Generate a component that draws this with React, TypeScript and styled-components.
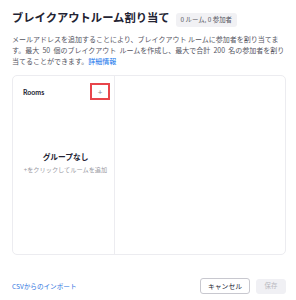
import React from "react";
import styled, { createGlobalStyle } from "styled-components";

const Global = createGlobalStyle`
  html, body { margin: 0; padding: 0; background: #fff; }
  body { font-family: Lato, "Noto Sans CJK JP", sans-serif; }
`;

const Page = styled.div`
  width: 296px;
  height: 300px;
  box-sizing: border-box;
  padding: 8px 10px 0 12px;
  display: flex;
  flex-direction: column;
`;

const Header = styled.div`
  display: flex;
  align-items: flex-start;
  gap: 6px;
`;

const Title = styled.h1`
  margin: 0;
  font-family: "Noto Sans CJK JP", sans-serif;
  font-size: 11.3px;
  line-height: 18px;
  font-weight: 700;
  color: #232333;
`;

const Badge = styled.span`
  margin-top: 5px;
  height: 14px;
  padding: 0 5px;
  border-radius: 3px;
  background: #f1f1f4;
  color: #555560;
  font-family: "Noto Sans CJK JP", sans-serif;
  font-size: 6.4px;
  line-height: 14px;
  white-space: nowrap;
`;

const Desc = styled.p`
  margin: 7px 0 0;
  width: 274px;
  font-family: "Noto Sans CJK JP", sans-serif;
  font-size: 7px;
  line-height: 11px;
  color: #55555f;
  white-space: nowrap;
`;

const WideLine = styled.span`
  word-spacing: 1.6px;
`;

const Link = styled.a`
  color: #0e71eb;
  text-decoration: none;
`;

const Panel = styled.div`
  margin-top: 8px;
  height: 180px;
  box-sizing: border-box;
  border: 1px solid #ececf0;
  border-radius: 5px;
  display: flex;
`;

const RoomsColumn = styled.div`
  width: 102px;
  box-sizing: border-box;
  border-right: 1px solid #ececf0;
  padding: 7px 4px 0 10px;
  display: flex;
  flex-direction: column;
`;

const RoomsHeader = styled.div`
  display: flex;
  align-items: center;
  justify-content: space-between;
`;

const RoomsLabel = styled.span`
  font-family: Lato, sans-serif;
  font-size: 7px;
  font-weight: 700;
  color: #232333;
`;

const AddButton = styled.button`
  width: 20px;
  height: 17px;
  box-sizing: border-box;
  border: 2px solid #e8454b;
  background: #fff;
  padding: 0;
  display: flex;
  align-items: center;
  justify-content: center;
  color: #8a8a93;
  font-family: Lato, sans-serif;
  font-size: 8px;
  line-height: 1;
`;

const Empty = styled.div`
  margin-top: 51px;
  display: flex;
  flex-direction: column;
  align-items: center;
  padding-right: 2px;
`;

const EmptyTitle = styled.div`
  font-family: "Noto Sans CJK JP", sans-serif;
  font-size: 7.7px;
  line-height: 12px;
  font-weight: 700;
  color: #232333;
`;

const EmptyHint = styled.div`
  margin-top: 2px;
  font-family: "Noto Sans CJK JP", sans-serif;
  font-size: 6.2px;
  line-height: 10px;
  color: #9a9aa3;
  white-space: nowrap;
`;

const Detail = styled.div`
  flex: 1;
`;

const Footer = styled.div`
  margin-top: 23px;
  display: flex;
  align-items: center;
  justify-content: space-between;
`;

const ImportLink = styled.a`
  font-family: "Noto Sans CJK JP", sans-serif;
  font-size: 6.6px;
  color: #2d74e0;
  text-decoration: none;
`;

const Actions = styled.div`
  display: flex;
  align-items: center;
  gap: 6px;
`;

const Button = styled.button<{ $disabled?: boolean }>`
  height: ${(p) => (p.$disabled ? "15px" : "16px")};
  width: ${(p) => (p.$disabled ? "30px" : "50px")};
  box-sizing: border-box;
  padding: 0;
  border-radius: 3px;
  border: 1px solid ${(p) => (p.$disabled ? "#f0f0f4" : "#c8c8cf")};
  background: ${(p) => (p.$disabled ? "#f0f0f4" : "#fff")};
  color: ${(p) => (p.$disabled ? "#b8b8c0" : "#232333")};
  font-family: "Noto Sans CJK JP", sans-serif;
  font-size: ${(p) => (p.$disabled ? "6.4px" : "6.8px")};
  line-height: 1;
`;

export default function App() {
  return (
    <>
      <Global />
      <Page>
        <Header>
          <Title>ブレイクアウトルーム割り当て</Title>
          <Badge>0 ルーム, 0 参加者</Badge>
        </Header>
        <Desc>
          メールアドレスを追加することにより、ブレイクアウト ルームに参加者を割り当てま
          <br />
          <WideLine>す。最大 50 個のブレイクアウト ルームを作成し、最大で合計 200 名の参加者を割り</WideLine>
          <br />
          当てることができます。<Link href="#">詳細情報</Link>
        </Desc>
        <Panel>
          <RoomsColumn>
            <RoomsHeader>
              <RoomsLabel>Rooms</RoomsLabel>
              <AddButton>+</AddButton>
            </RoomsHeader>
            <Empty>
              <EmptyTitle>グループなし</EmptyTitle>
              <EmptyHint>+をクリックしてルームを追加</EmptyHint>
            </Empty>
          </RoomsColumn>
          <Detail />
        </Panel>
        <Footer>
          <ImportLink href="#">CSVからのインポート</ImportLink>
          <Actions>
            <Button>キャンセル</Button>
            <Button $disabled>保存</Button>
          </Actions>
        </Footer>
      </Page>
    </>
  );
}
